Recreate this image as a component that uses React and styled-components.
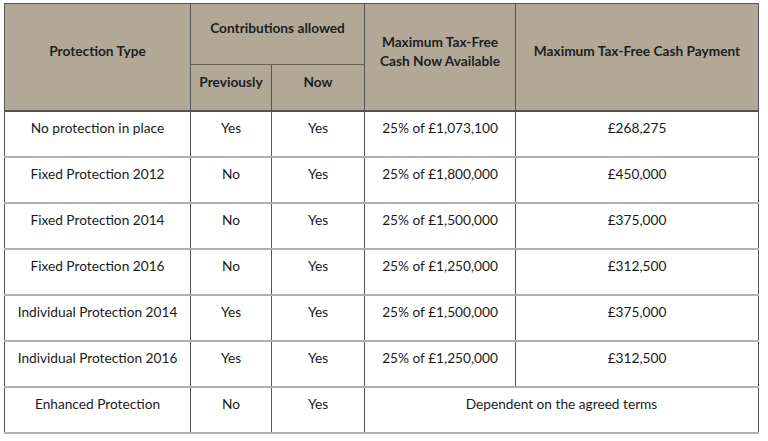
import React from 'react'
import styled, { createGlobalStyle } from 'styled-components'

const GlobalStyle = createGlobalStyle`
  html, body {
    margin: 0;
    padding: 0;
    background: #fff;
  }
  body {
    font-family: Lato, 'Liberation Sans', sans-serif;
    color: #1a1a1a;
  }
`

const Page = styled.div`
  padding: 3px 0 0 4px;
`

const Table = styled.table`
  width: 755px;
  border-collapse: collapse;
  table-layout: fixed;
  font-size: 13.7px;
  border: 1px solid #555;
  border-right-color: #8a8a8a;
  border-bottom-color: #777;
`

const Head = styled.th`
  background: #b3a898;
  font-weight: 700;
  color: #1e1e1e;
  text-align: center;
  vertical-align: middle;
  padding: 0 6px 13px;
  line-height: 19px;
  height: ${(p) => p.$h || 0}px;
  border-left: 1px solid #555;
  border-right: 1px solid #555;
  border-bottom: ${(p) => (p.$split ? '1px solid #6a6358' : '2px solid #55524d')};
`

const Cell = styled.td`
  text-align: center;
  vertical-align: middle;
  padding: 0 6px 13px;
  height: 31px;
  line-height: 16px;
  border-left: 1px solid #555;
  border-right: 1px solid #555;
  border-bottom: 2px solid #b0b0b0;
`

const rows = [
  ['No protection in place', 'Yes', 'Yes', '25% of £1,073,100', '£268,275'],
  ['Fixed Protection 2012', 'No', 'Yes', '25% of £1,800,000', '£450,000'],
  ['Fixed Protection 2014', 'No', 'Yes', '25% of £1,500,000', '£375,000'],
  ['Fixed Protection 2016', 'No', 'Yes', '25% of £1,250,000', '£312,500'],
  ['Individual Protection 2014', 'Yes', 'Yes', '25% of £1,500,000', '£375,000'],
  ['Individual Protection 2016', 'Yes', 'Yes', '25% of £1,250,000', '£312,500'],
]

export default function App() {
  return (
    <>
      <GlobalStyle />
      <Page>
        <Table>
          <colgroup>
            <col style={{ width: 186 }} />
            <col style={{ width: 81 }} />
            <col style={{ width: 93 }} />
            <col style={{ width: 151 }} />
            <col />
          </colgroup>
          <thead>
            <tr>
              <Head rowSpan={2}>Protection Type</Head>
              <Head colSpan={2} $h={47} $split>
                Contributions allowed
              </Head>
              <Head rowSpan={2}>
                Maximum Tax-Free
                <br />
                Cash Now Available
              </Head>
              <Head rowSpan={2}>Maximum Tax-Free Cash Payment</Head>
            </tr>
            <tr>
              <Head $h={32}>Previously</Head>
              <Head $h={32}>Now</Head>
            </tr>
          </thead>
          <tbody>
            {rows.map((r) => (
              <tr key={r[0]}>
                {r.map((c, i) => (
                  <Cell key={i}>{c}</Cell>
                ))}
              </tr>
            ))}
            <tr>
              <Cell>Enhanced Protection</Cell>
              <Cell>No</Cell>
              <Cell>Yes</Cell>
              <Cell colSpan={2}>Dependent on the agreed terms</Cell>
            </tr>
          </tbody>
        </Table>
      </Page>
    </>
  )
}
